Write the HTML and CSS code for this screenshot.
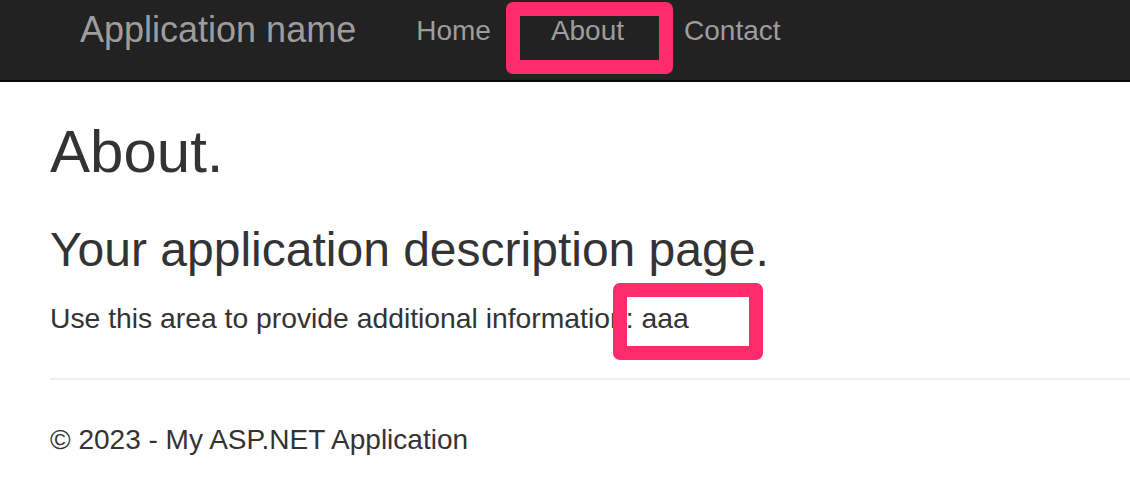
FILE: index.html
```html
<!DOCTYPE html>
<html lang="en">
<head>
<meta charset="utf-8">
<title>About - My ASP.NET Application</title>
<link rel="stylesheet" href="styles.css">
</head>
<body>
<header class="navbar">
  <a class="brand" href="#">Application name</a>
  <nav class="nav">
    <a class="nav-link" href="#">Home</a>
    <a class="nav-link" href="#">About</a>
    <a class="nav-link" href="#">Contact</a>
  </nav>
</header>
<main class="content">
  <h2 class="title">About.</h2>
  <h3 class="subtitle">Your application description page.</h3>
  <p class="info">Use this area to provide additional information: aaa</p>
  <hr class="rule">
  <footer class="footer">
    <p class="footer-text">&copy; 2023 - My ASP.NET Application</p>
  </footer>
</main>
<div class="mark mark-nav"></div>
<div class="mark mark-text"></div>
</body>
</html>
```

FILE: styles.css
```css
html, body {
  margin: 0;
  padding: 0;
}
body {
  position: relative;
  background: #ffffff;
  color: #333333;
  font-family: "Liberation Sans", Arial, sans-serif;
  width: 1130px;
  height: 504px;
  overflow: hidden;
}
.navbar {
  display: flex;
  align-items: flex-start;
  height: 80px;
  background: #222222;
  border-bottom: 2px solid #080808;
  padding-left: 50px;
  box-sizing: content-box;
}
.brand {
  display: block;
  padding: 10px 30px 0 30px;
  font-size: 36px;
  line-height: 40px;
  color: #9d9d9d;
  text-decoration: none;
}
.nav {
  display: flex;
}
.nav-link {
  display: block;
  padding: 15px 30px 0 30px;
  font-size: 28px;
  line-height: 32px;
  color: #9d9d9d;
  text-decoration: none;
}
.content {
  display: flex;
  flex-direction: column;
  padding: 37px 0 0 50px;
}
.title {
  margin: 0 0 39px 0;
  font-size: 60px;
  line-height: 66px;
  font-weight: 400;
}
.subtitle {
  margin: 0 0 22px 0;
  font-size: 48px;
  line-height: 52px;
  font-weight: 400;
}
.info {
  margin: 0 0 40px 0;
  font-size: 28.3px;
  line-height: 40px;
}
.rule {
  margin: 0 0 40px 0;
  border: 0;
  border-top: 2px solid #eeeeee;
  height: 0;
}
.footer-text {
  margin: 0;
  font-size: 28px;
  line-height: 40px;
}
.mark {
  position: absolute;
  border: 14px solid #fe2c6a;
  border-radius: 7px;
  box-sizing: border-box;
}
.mark-nav {
  left: 506px;
  top: 2px;
  width: 167px;
  height: 72px;
}
.mark-text {
  left: 613px;
  top: 283px;
  width: 150px;
  height: 77px;
}
```
